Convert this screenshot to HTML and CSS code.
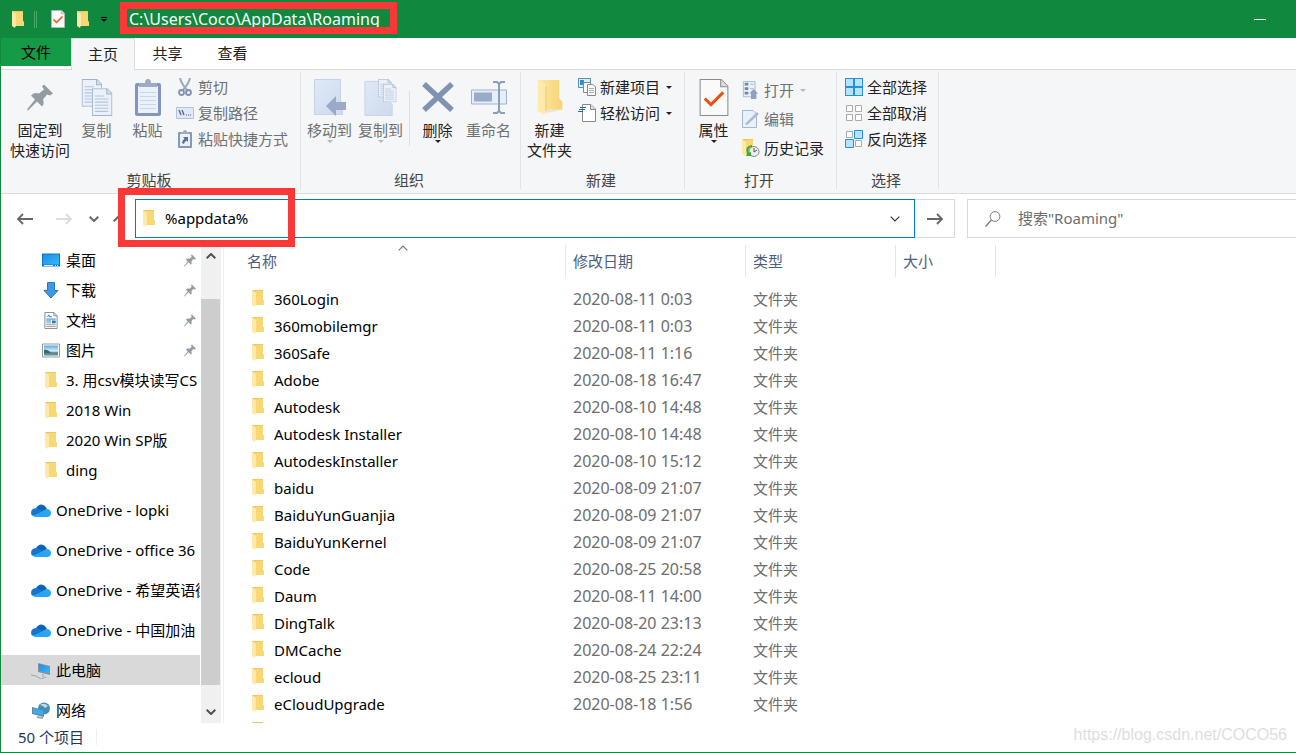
FILE: index.html
```html
<!DOCTYPE html>
<html lang="zh-CN">
<head>
<meta charset="utf-8">
<title>Roaming</title>
<link rel="stylesheet" href="styles.css">
</head>
<body>
<svg class="sprite" aria-hidden="true">
  <defs>
    <linearGradient id="gold" x1="0" x2="1"><stop offset="0" stop-color="#ffe9a3"/><stop offset="1" stop-color="#f7d374"/></linearGradient>
    <linearGradient id="pale" x1="0" y1="0" x2="1" y2="1"><stop offset="0" stop-color="#dfe9f7"/><stop offset="1" stop-color="#cddaed"/></linearGradient>
    <linearGradient id="sky" x1="0" y1="0" x2="0" y2="1"><stop offset="0" stop-color="#5aa5e8"/><stop offset=".5" stop-color="#cfe8f8"/><stop offset="1" stop-color="#3f7f9a"/></linearGradient>
    <linearGradient id="screen" x1="0" y1="0" x2="1" y2="1"><stop offset="0" stop-color="#1b8fe6"/><stop offset="1" stop-color="#35b5ff"/></linearGradient>
  </defs>
  <symbol id="folder" viewBox="0 0 12 17"><path d="M0 0H11V10L12 11V15H3Z" fill="#f0c75f"/><path d="M3 1H11V10L12 11V15H3Z" fill="#f8d775"/><path d="M0 0L4 3V14L3 17L0 15Z" fill="#ffe9a8"/></symbol>
  <symbol id="bigfolder" viewBox="0 0 24 36"><path d="M0 1H21V19L24 22V30H5Z" fill="url(#gold)"/><path d="M6 30H24V30L8 33Z" fill="#eee3d0"/><path d="M0 1L8 6V33L6 35L0 31Z" fill="#ffeaae"/><path d="M8 7V31" stroke="#edc867"/></symbol>
  <symbol id="check" viewBox="0 0 28 36"><path d="M.5.5H21L27.500 7V35.500H.5Z" fill="#fafafa" stroke="#8c8c8c"/><path d="M20.500.5V7.500H27.500" fill="#ddd" stroke="#8c8c8c"/><path d="M5 19L11 25L23 13" fill="none" stroke="#ea5212" stroke-width="3"/></symbol>
  <symbol id="pin" viewBox="0 0 26 26"><path d="M17 0L26 9L23 11L20 10L16 15C17 18 17 20 15 22L10 17L1 26L0 25L8 15L4 11C7 8 9 8 12 9L17 5L15 2Z" fill="#929da3"/></symbol>
  <symbol id="page" viewBox="0 0 20 27"><path d="M.5.5H15L19.500 5V26.500H.5Z" fill="#eaf1fb" stroke="#a3b3cd"/><path d="M14.500.5V5.500H19.500" fill="#d5dfef" stroke="#a3b3cd"/><path d="M3 7.500H12M3 10.500H16M3 13.500H16M3 16.500H16M3 19.500H16M3 22.500H16" stroke="#b5c3da"/></symbol>
  <symbol id="copy" viewBox="0 0 30 36"><use href="#page" width="20" height="27"/><use href="#page" x="10" y="9" width="20" height="27"/></symbol>
  <symbol id="paste" viewBox="0 0 26 37"><rect y="4" width="26" height="33" rx="2" fill="#8296bd"/><rect x="3" y="7" width="20" height="27" fill="#eaf1fb"/><path d="M5 13.500H21M5 17.500H21M5 21.500H21M5 25.500H21M5 29.500H21" stroke="#c9d6e9"/><path d="M4 8V4H10Q10 0 13 0T16 4H22V8Z" fill="#a0aac0"/></symbol>
  <symbol id="cut" viewBox="0 0 14 18"><path d="M2 0Q3 5 9 12M12 0Q11 5 5 12" fill="none" stroke="#9aa9c2" stroke-width="2"/><circle cx="3.500" cy="14.500" r="2.500" fill="none" stroke="#7f93b5" stroke-width="1.800"/><circle cx="10.500" cy="14.500" r="2.500" fill="none" stroke="#7f93b5" stroke-width="1.800"/></symbol>
  <symbol id="path" viewBox="0 0 18 12"><path d="M.5.5H17.500V11.500H.5Z" fill="#dfe9f7" stroke="#b3c3dc"/><path d="M3 3L5 8M6 3L8 8" stroke="#4c6288" stroke-width="1.300"/><path d="M10 8H11M12 8H13M14 8H15" stroke="#4c6288"/></symbol>
  <symbol id="shortcut" viewBox="0 0 14 18"><rect y="2" width="14" height="16" rx="1" fill="#8598bb"/><path d="M2 4H12V16H2Z" fill="#eaf1fb"/><path d="M3 4V2H5Q5 0 7 0T9 2H11V4Z" fill="#a0aac0"/><path d="M5 7H10V12L8.500 10.500Q6 12 6 14L4 13Q4 11 6.500 8.500Z" fill="#566f9b"/></symbol>
  <symbol id="move" viewBox="0 0 32 37"><path d="M.5.5H26.500V22L28.500 24V35.500H.5Z" fill="url(#pale)" stroke="#c5d3e8"/><path d="M12 27L22 17V23H32V31H22V37Z" fill="#9aaac8"/></symbol>
  <symbol id="copyto" viewBox="0 0 34 38"><path d="M.5 2.500H26.500V24L28.500 26V37.500H.5Z" fill="url(#pale)" stroke="#c5d3e8"/><use href="#page" x="14" width="14" height="19"/><use href="#page" x="19" y="5" width="14" height="19"/></symbol>
  <symbol id="delete" viewBox="0 0 36 37"><path d="M4 5L32 31M32 5L4 31" stroke="#8092b3" stroke-width="5.500"/></symbol>
  <symbol id="rename" viewBox="0 0 36 34"><path d="M.5 9.500H35.500V23.500H.5Z" fill="#e5eefa" stroke="#9fb1cf"/><path d="M3 12H21V21H3Z" fill="#9aabc9"/><path d="M22 1.500H26L28 3.500L30 1.500H34M28 3V31M22 32.500H26L28 30.500L30 32.500H34" fill="none" stroke="#8b9dbd" stroke-width="2"/></symbol>
  <symbol id="newitem" viewBox="0 0 18 18"><path d="M.5.5H12.500V9.500H.5Z" fill="#d7effc" stroke="#5790b0"/><path d="M2 2H6V7H2Z" fill="#398ccc"/><path d="M5.500 4.500H12.500V14.500H5.500Z" fill="#fff" stroke="#888"/><path d="M9.500 6.500H15L17.500 9V17.500H9.500Z" fill="#fff" stroke="#888"/><path d="M11 10.500H16M11 12.500H16M11 14.500H16" stroke="#aaa"/></symbol>
  <symbol id="easy" viewBox="0 0 18 18"><path d="M4.500.5H13L17.500 5V17.500H4.500Z" fill="#fff" stroke="#888"/><path d="M12.500.5V5.500H17.500" fill="#ddd" stroke="#888"/><path d="M2 3.500H8M1 5.500H7M0 7.500H5" stroke="#2467a8"/></symbol>
  <symbol id="open" viewBox="0 0 18 20"><path d="M.5.5H13.500V17.500H.5Z" fill="#e8f0fb" stroke="#a7b5ce"/><path d="M2 2H6V5H2ZM2 7H6V10H2ZM2 12H6V15H2Z" fill="#7186aa"/><path d="M8 3.500H12M8 8.500H12" stroke="#a7b5ce"/><path d="M12 9L17 14H15V20H9V14H7Z" fill="#8fa1c1"/></symbol>
  <symbol id="edit" viewBox="0 0 18 18"><path d="M.5.5H11L14.500 4V17.500H.5Z" fill="#e8f0fb" stroke="#a7b5ce"/><path d="M3 14L15 2L17 4L5 15Z" fill="#a9b9d3"/></symbol>
  <symbol id="history" viewBox="0 0 18 18"><use href="#folder" width="12" height="17"/><circle cx="12" cy="12.500" r="5" fill="#eee" stroke="#888"/><path d="M12 9V13L15 11" fill="none" stroke="#555"/><path d="M10 8Q5 8 7 14L9 13V17H4L5 15Q2 7 10 6Z" fill="#36ad38"/></symbol>
  <symbol id="all" viewBox="0 0 18 18"><path d="M0 0H18V18H0Z" fill="#278ee0"/><path d="M1 1H8V8H1ZM10 1H17V8H10ZM1 10H8V17H1ZM10 10H17V17H10Z" fill="#b8e3ff"/></symbol>
  <symbol id="none" viewBox="0 0 18 18"><path d="M1.500 1.500H7.500V7.500H1.500ZM10.500 1.500H16.500V7.500H10.500ZM1.500 10.500H7.500V16.500H1.500ZM10.500 10.500H16.500V16.500H10.500Z" fill="#fff" stroke="#aaa"/></symbol>
  <symbol id="invert" viewBox="0 0 18 18"><use href="#none" width="18" height="18"/><path d="M9.500.5H17.500V8.500H9.500ZM.5 9.500H8.500V17.500H.5Z" fill="#b8e3ff" stroke="#278ee0"/></symbol>
  <symbol id="caret" viewBox="0 0 6 3"><path d="M0 0H6L3 3Z" fill="currentColor"/></symbol>
  <symbol id="chev" viewBox="0 0 10 6"><path d="M.7.7L5 5L9.300.7" fill="none" stroke="currentColor" stroke-width="var(--w,1.200)"/></symbol>
  <symbol id="chevup" viewBox="0 0 10 6"><path d="M.7 5.300L5 1L9.300 5.300" fill="none" stroke="currentColor" stroke-width="var(--w,1.200)"/></symbol>
  <symbol id="arrow" viewBox="0 0 16 12"><path d="M0 6H15M10 1L15 6L10 11" fill="none" stroke="currentColor" stroke-width="1.800"/></symbol>
  <symbol id="arrowleft" viewBox="0 0 16 12"><path d="M16 6H1M6 1L1 6L6 11" fill="none" stroke="currentColor" stroke-width="1.800"/></symbol>
  <symbol id="lens" viewBox="0 0 16 16"><circle cx="10" cy="5.500" r="4.900" fill="none" stroke="currentColor"/><path d="M6.500 9L.5 15.500" stroke="currentColor" stroke-width="1.200"/></symbol>
  <symbol id="desktop" viewBox="0 0 18 14"><path d="M0 0H18V13H0Z" fill="#0b76cc"/><path d="M1 1H17V11H1Z" fill="url(#screen)"/><path d="M2 12H11M13 12H14M15 12H16" stroke="#d9f0ff"/></symbol>
  <symbol id="down" viewBox="0 0 16 17"><path d="M4.500.5H11.500V8.500H15L8 16L1 8.500H4.500Z" fill="#3e98e4" stroke="#2879c2"/></symbol>
  <symbol id="doc" viewBox="0 0 14 18"><path d="M.5.5H10L13.500 4V17.500H.5Z" fill="#fff" stroke="#888"/><path d="M10 .5V4H13.500" fill="none" stroke="#888"/><path d="M3 5L5 3V5H8" fill="none" stroke="#1683d2"/><path d="M2 7.500H12M2 9.500H7" stroke="#1683d2"/><path d="M8 9H12V12H8Z" fill="#227fb9"/><path d="M2 11.500H7M2 13.500H12M2 15.500H12" stroke="#999"/></symbol>
  <symbol id="picture" viewBox="0 0 18 14"><path d="M.5.5H17.500V13.500H.5Z" fill="#fff" stroke="#999"/><path d="M2 2H16V12H2Z" fill="url(#sky)"/><path d="M2 6Q6 6 9 9H16V10H2Z" fill="#376b57"/></symbol>
  <symbol id="cloud" viewBox="0 0 20 13"><path d="M5 4Q9-2 14 2L16 5L11 8Z" fill="#0864b8"/><path d="M0 9Q0 4 6 4L13 8L2 12Q0 11 0 9Z" fill="#1078d0"/><path d="M12 7L15 5Q20 5 20 9Q20 13 16 13H4L2 12Z" fill="#29a7ee"/></symbol>
  <symbol id="pc" viewBox="0 0 20 17"><path d="M7 1L19 4V13L7 10Z" fill="#85929b"/><path d="M8 2L18 5V11L8 9Z" fill="url(#screen)"/><path d="M0 13L5 14L10 17L15 15M12 12V15" fill="none" stroke="#98a5ad"/></symbol>
  <symbol id="network" viewBox="0 0 18 17"><circle cx="12" cy="6.500" r="6" fill="#438eb4"/><path d="M8 3Q12 0 16 4L13 6L11 4Z" fill="#c0ddeb"/><path d="M0 5L12 8V15L0 12Z" fill="#67889d"/><path d="M1 6L11 9V13L1 11Z" fill="#34adf5"/><path d="M5 15L11 16" stroke="#9aa8af" stroke-width="2"/></symbol>
</svg>

<div class="window">
  <header class="titlebar">
    <svg class="i-folder"><use href="#folder"/></svg>
    <span class="quick-sep"></span>
    <button class="plain" aria-label="属性"><svg class="i-check-sm"><use href="#check"/></svg></button>
    <button class="plain" aria-label="新建文件夹"><svg class="i-folder"><use href="#folder"/></svg></button>
    <button class="plain customize" aria-label="自定义快速访问工具栏"><span></span><svg class="i-caret"><use href="#caret"/></svg></button>
    <div class="title">C:\Users\Coco\AppData\Roaming<span class="mark mark-title"></span></div>
    <button class="plain minimize" aria-label="最小化"><span></span></button>
  </header>

  <nav class="tabs">
    <button class="tab tab-file">文件</button><button class="tab tab-active">主页</button><button class="tab">共享</button><button class="tab">查看</button>
  </nav>

  <section class="ribbon">
    <div class="group">
      <div class="tools lead">
        <button class="big wide"><svg class="i-pin-lg"><use href="#pin"/></svg><span>固定到<br>快速访问</span></button>
        <button class="big off"><svg class="i-big"><use href="#copy"/></svg><span>复制</span></button>
        <button class="big off"><svg class="i-big"><use href="#paste"/></svg><span>粘贴</span></button>
        <div class="stack">
          <button class="small off"><svg class="i-sm"><use href="#cut"/></svg>剪切</button>
          <button class="small off"><svg class="i-sm"><use href="#path"/></svg>复制路径</button>
          <button class="small off"><svg class="i-sm"><use href="#shortcut"/></svg>粘贴快捷方式</button>
        </div>
      </div>
      <div class="caption">剪贴板</div>
    </div>
    <div class="group">
      <div class="tools">
        <button class="big off"><svg class="i-big"><use href="#move"/></svg><span>移动到</span><svg class="i-caret"><use href="#caret"/></svg></button>
        <button class="big off"><svg class="i-big"><use href="#copyto"/></svg><span>复制到</span><svg class="i-caret"><use href="#caret"/></svg></button>
        <span class="inner-sep"></span>
        <button class="big"><svg class="i-big"><use href="#delete"/></svg><span>删除</span><svg class="i-caret"><use href="#caret"/></svg></button>
        <button class="big off"><svg class="i-big"><use href="#rename"/></svg><span>重命名</span></button>
      </div>
      <div class="caption">组织</div>
    </div>
    <div class="group">
      <div class="tools">
        <button class="big"><svg class="i-big"><use href="#bigfolder"/></svg><span>新建<br>文件夹</span></button>
        <div class="stack">
          <button class="small"><svg class="i-sm"><use href="#newitem"/></svg>新建项目<svg class="i-caret"><use href="#caret"/></svg></button>
          <button class="small"><svg class="i-sm"><use href="#easy"/></svg>轻松访问<svg class="i-caret"><use href="#caret"/></svg></button>
        </div>
      </div>
      <div class="caption">新建</div>
    </div>
    <div class="group">
      <div class="tools">
        <button class="big"><svg class="i-big"><use href="#check"/></svg><span>属性</span><svg class="i-caret"><use href="#caret"/></svg></button>
        <div class="stack loose">
          <button class="small off"><svg class="i-sm"><use href="#open"/></svg>打开<svg class="i-caret"><use href="#caret"/></svg></button>
          <button class="small off"><svg class="i-sm"><use href="#edit"/></svg>编辑</button>
          <button class="small"><svg class="i-sm"><use href="#history"/></svg>历史记录</button>
        </div>
      </div>
      <div class="caption">打开</div>
    </div>
    <div class="group">
      <div class="tools">
        <div class="stack">
          <button class="small"><svg class="i-sm"><use href="#all"/></svg>全部选择</button>
          <button class="small"><svg class="i-sm"><use href="#none"/></svg>全部取消</button>
          <button class="small"><svg class="i-sm"><use href="#invert"/></svg>反向选择</button>
        </div>
      </div>
      <div class="caption">选择</div>
    </div>
  </section>

  <div class="location">
    <div class="history">
      <button class="plain" aria-label="后退"><svg class="i-arrow"><use href="#arrowleft"/></svg></button>
      <button class="plain faint" aria-label="前进"><svg class="i-arrow"><use href="#arrow"/></svg></button>
      <button class="plain recent" aria-label="最近浏览的位置"><svg class="i-chev bold"><use href="#chev"/></svg></button>
      <button class="plain" aria-label="上移"><svg class="i-chev bold"><use href="#chevup"/></svg></button>
    </div>
    <div class="address">
      <svg class="i-folder"><use href="#folder"/></svg>
      <input type="text" value="%appdata%" aria-label="地址">
      <button class="plain" aria-label="以前的位置"><svg class="i-chev"><use href="#chev"/></svg></button>
      <span class="mark mark-address"></span>
    </div>
    <button class="plain go" aria-label="转到"><svg class="i-arrow"><use href="#arrow"/></svg></button>
    <label class="search"><svg class="i-lens"><use href="#lens"/></svg><input type="text" placeholder='搜索"Roaming"' aria-label="搜索"></label>
  </div>

  <main class="content">
    <nav class="tree">
      <a href="#" class="node sub"><svg><use href="#desktop"/></svg><span>桌面</span><svg class="i-pin"><use href="#pin"/></svg></a>
      <a href="#" class="node sub"><svg><use href="#down"/></svg><span>下载</span><svg class="i-pin"><use href="#pin"/></svg></a>
      <a href="#" class="node sub"><svg><use href="#doc"/></svg><span>文档</span><svg class="i-pin"><use href="#pin"/></svg></a>
      <a href="#" class="node sub"><svg><use href="#picture"/></svg><span>图片</span><svg class="i-pin"><use href="#pin"/></svg></a>
      <a href="#" class="node sub"><svg><use href="#folder"/></svg><span>3. 用csv模块读写CS</span></a>
      <a href="#" class="node sub"><svg><use href="#folder"/></svg><span>2018 Win</span></a>
      <a href="#" class="node sub"><svg><use href="#folder"/></svg><span>2020 Win SP版</span></a>
      <a href="#" class="node sub"><svg><use href="#folder"/></svg><span>ding</span></a>
      <a href="#" class="node root"><svg><use href="#cloud"/></svg><span>OneDrive - lopki</span></a>
      <a href="#" class="node root"><svg><use href="#cloud"/></svg><span>OneDrive - office 36</span></a>
      <a href="#" class="node root"><svg><use href="#cloud"/></svg><span>OneDrive - 希望英语街</span></a>
      <a href="#" class="node root"><svg><use href="#cloud"/></svg><span>OneDrive - 中国加油</span></a>
      <a href="#" class="node root selected"><svg><use href="#pc"/></svg><span>此电脑</span></a>
      <a href="#" class="node root"><svg><use href="#network"/></svg><span>网络</span></a>
    </nav>
    <div class="scroll">
      <button class="plain" aria-label="向上滚动"><svg class="i-chev bold"><use href="#chevup"/></svg></button>
      <div class="track"><div class="thumb"></div></div>
      <button class="plain" aria-label="向下滚动"><svg class="i-chev bold"><use href="#chev"/></svg></button>
    </div>
    <div class="list">
      <table class="files">
        <colgroup><col class="c-name"><col class="c-date"><col class="c-type"><col class="c-size"></colgroup>
        <thead><tr><th>名称<svg class="i-chev sort"><use href="#chevup"/></svg></th><th>修改日期</th><th>类型</th><th>大小</th></tr></thead>
        <tbody>
          <tr><td><svg class="i-folder"><use href="#folder"/></svg>360Login</td><td class="date">2020-08-11 0:03</td><td>文件夹</td><td></td></tr>
          <tr><td><svg class="i-folder"><use href="#folder"/></svg>360mobilemgr</td><td class="date">2020-08-11 0:03</td><td>文件夹</td><td></td></tr>
          <tr><td><svg class="i-folder"><use href="#folder"/></svg>360Safe</td><td class="date">2020-08-11 1:16</td><td>文件夹</td><td></td></tr>
          <tr><td><svg class="i-folder"><use href="#folder"/></svg>Adobe</td><td class="date">2020-08-18 16:47</td><td>文件夹</td><td></td></tr>
          <tr><td><svg class="i-folder"><use href="#folder"/></svg>Autodesk</td><td class="date">2020-08-10 14:48</td><td>文件夹</td><td></td></tr>
          <tr><td><svg class="i-folder"><use href="#folder"/></svg>Autodesk Installer</td><td class="date">2020-08-10 14:48</td><td>文件夹</td><td></td></tr>
          <tr><td><svg class="i-folder"><use href="#folder"/></svg>AutodeskInstaller</td><td class="date">2020-08-10 15:12</td><td>文件夹</td><td></td></tr>
          <tr><td><svg class="i-folder"><use href="#folder"/></svg>baidu</td><td class="date">2020-08-09 21:07</td><td>文件夹</td><td></td></tr>
          <tr><td><svg class="i-folder"><use href="#folder"/></svg>BaiduYunGuanjia</td><td class="date">2020-08-09 21:07</td><td>文件夹</td><td></td></tr>
          <tr><td><svg class="i-folder"><use href="#folder"/></svg>BaiduYunKernel</td><td class="date">2020-08-09 21:07</td><td>文件夹</td><td></td></tr>
          <tr><td><svg class="i-folder"><use href="#folder"/></svg>Code</td><td class="date">2020-08-25 20:58</td><td>文件夹</td><td></td></tr>
          <tr><td><svg class="i-folder"><use href="#folder"/></svg>Daum</td><td class="date">2020-08-11 14:00</td><td>文件夹</td><td></td></tr>
          <tr><td><svg class="i-folder"><use href="#folder"/></svg>DingTalk</td><td class="date">2020-08-20 23:13</td><td>文件夹</td><td></td></tr>
          <tr><td><svg class="i-folder"><use href="#folder"/></svg>DMCache</td><td class="date">2020-08-24 22:24</td><td>文件夹</td><td></td></tr>
          <tr><td><svg class="i-folder"><use href="#folder"/></svg>ecloud</td><td class="date">2020-08-25 23:11</td><td>文件夹</td><td></td></tr>
          <tr><td><svg class="i-folder"><use href="#folder"/></svg>eCloudUpgrade</td><td class="date">2020-08-18 1:56</td><td>文件夹</td><td></td></tr>
          <tr><td><svg class="i-folder"><use href="#folder"/></svg></td><td></td><td></td><td></td></tr>
        </tbody>
      </table>
    </div>
  </main>

  <footer class="status"><span class="count">50 个项目</span><span class="watermark">https://blog.csdn.net/COCO56</span></footer>
</div>
</body>
</html>
```

FILE: styles.css
```css
* { box-sizing: border-box; }
body, button, input {
  font-family: "Noto Sans", "Noto Sans CJK SC", sans-serif;
  font-size: 15px;
  line-height: 20px;
}
body { margin: 0; color: #000; background: #fff; }
button, input { margin: 0; padding: 0; border: 0; background: none; color: inherit; outline: 0; }
svg { display: block; flex: none; }
.sprite { position: absolute; width: 0; height: 0; }
.plain { display: flex; align-items: center; justify-content: center; }

.i-folder { width: 12px; height: 17px; }
.i-check-sm { width: 14px; height: 18px; }
.i-caret { width: 6px; height: 3px; }
.i-chev { width: 10px; height: 6px; }
.bold { --w: 2; }
.i-arrow { width: 16px; height: 12px; }
.i-lens { width: 16px; height: 16px; }
.i-pin { width: 12px; height: 13px; }
.i-big { width: 36px; height: 37px; }
.i-pin-lg { width: 26px; height: 37px; }
.i-sm { width: 18px; height: 18px; }

.window {
  height: 100vh;
  display: flex;
  flex-direction: column;
  overflow: hidden;
  border: solid #10893e;
  border-width: 0 0 1px 1px;
}

.titlebar {
  flex: none;
  height: 38px;
  display: flex;
  align-items: center;
  padding-left: 11px;
  background: #10893e;
  color: #fff;
}
.quick-sep { width: 3px; height: 17px; margin: 0 14px 0 10px; border: 1px solid #4aa76c; border-width: 0 1px; }
.titlebar .plain + .plain { margin-left: 12px; }
.titlebar .customize { flex-direction: column; gap: 1px; color: #000; }
.customize span { width: 6px; height: 1px; background: #000; }
.title { position: relative; flex: 1; margin-left: 22px; font-size: 16px; white-space: nowrap; }
.minimize { width: 72px; height: 38px; }
.minimize span { width: 12px; height: 1px; background: #fff; }

.mark { position: absolute; border: 7px solid #fb3838; pointer-events: none; z-index: 2; }
.mark-title { left: -9px; top: -7px; width: 277px; height: 32px; }
.mark-address { left: -18px; top: -12px; width: 177px; height: 59px; }

.tabs { flex: none; height: 32px; display: flex; border-bottom: 1px solid #dadbdc; }
.tab { width: 65px; height: 30px; color: #222; }
.tab-file { width: 70px; height: 28px; background: #159a48; color: #000; }
.tab-active { width: 64px; height: 32px; padding-bottom: 2px; background: #f5f6f7; border: 1px solid #dadbdc; border-bottom: 0; }

.ribbon { flex: none; height: 124px; display: flex; padding: 2px 0 4px; background: #f5f6f7; border-bottom: 1px solid #dadbdc; }
.group { display: flex; flex-direction: column; justify-content: space-between; padding: 5px 6px 0 3px; border-right: 1px solid #e2e3e4; }
.tools { display: flex; align-items: flex-start; }
.lead { padding-left: 5px; }
.caption { text-align: center; line-height: 18px; color: #444; }
.big { display: flex; flex-direction: column; align-items: center; width: 51px; padding-top: 2px; white-space: nowrap; color: #222; }
.big > span { margin-top: 4px; }
.big .i-caret { margin-top: 0; }
.big.wide { width: 62px; }
.off { color: #6e7073; }
.off .i-caret { color: #b5b7b9; }
.inner-sep { width: 1px; height: 55px; margin: 14px 2px 0 3px; background: #dfe0e1; }
.stack { display: flex; flex-direction: column; gap: 6px; padding: 0 6px 0 3px; }
.stack.loose { gap: 9px; padding-top: 3px; }
.small { display: flex; align-items: center; gap: 4px; white-space: nowrap; color: #222; }
.small.off { color: #6e7073; }
.small .i-caret { margin-left: 2px; }
.group:last-child { padding-left: 8px; padding-right: 11px; }
.group:last-child .stack { padding: 0; }

.location { flex: none; display: flex; height: 51px; padding: 5px 0 7px; }
.history { display: flex; align-items: center; width: 134px; flex: none; padding-left: 16px; color: #666; }
.history .plain + .plain { margin-left: 23px; }
.history .recent.plain { margin-left: 17px; }
.history .recent + .plain { margin-left: 14px; }
.history .faint { color: #ddd; }
.address { position: relative; flex: 1; min-width: 200px; display: flex; align-items: center; padding: 0 14px 0 7px; border: 1px solid #0078d7; }
.address input { flex: 1; min-width: 0; margin-left: 10px; padding-bottom: 2px; }
.address .plain { color: #333; }
.go { width: 40px; border: 1px solid #d9d9d9; border-left: 0; color: #666; }
.search { flex: 0 1 329px; display: flex; align-items: center; margin-left: 12px; padding-left: 17px; gap: 17px; border: 1px solid #d9d9d9; border-right: 0; color: #767676; }
.search input { flex: 1; min-width: 0; padding-bottom: 2px; }
.search input::placeholder { color: #6d6d6d; opacity: 1; }

.content { flex: 1; min-height: 0; display: flex; overflow: hidden; }
.tree { width: 199px; flex: none; overflow: hidden; }
.node { display: flex; align-items: center; height: 30px; color: #000; text-decoration: none; white-space: nowrap; }
.node.sub { padding: 0 4px 0 41px; }
.node.root { padding-left: 30px; margin-top: 10px; }
.node.sub span { margin-left: 6px; }
.node.root span { margin-left: 5px; }
.node.sub > svg:first-child { width: 18px; height: 17px; }
.node.root > svg:first-child { width: 20px; height: 17px; }
.node .i-pin { margin-left: auto; }
.selected { background: #d9d9d9; }
.scroll { width: 20px; flex: none; display: flex; flex-direction: column; margin-left: 1px; background: #f0f0f0; color: #505050; }
.scroll .plain { height: 22px; }
.track { flex: 1; display: flex; flex-direction: column; padding: 32px 1px 16px 0; }
.thumb { flex: 1; background: #cdcdcd; }
.list { flex: 1; min-width: 0; margin-left: 2px; padding-left: 16px; border-left: 1px solid #f0f0f0; overflow: hidden; }
.files { width: 756px; table-layout: fixed; border-collapse: separate; border-spacing: 0; color: #6d6d6d; }
.c-name { width: 326px; }
.c-date { width: 180px; }
.c-type { width: 150px; }
.c-size { width: 100px; }
.files th { position: relative; height: 32px; padding: 0 7px; text-align: left; font-weight: 400; color: #4c607a; border-right: 1px solid #e5e5e5; }
.files tbody::before { content: ""; display: block; height: 8px; }
.files td { height: 27px; padding: 0 7px; white-space: nowrap; }
.files td:first-child { display: flex; align-items: center; gap: 10px; padding-left: 12px; color: #000; }
.files .date { font-size: 16px; }
.sort { position: absolute; top: 0; left: 50%; margin-left: -5px; color: #777; }

.status { flex: none; height: 29px; display: flex; align-items: center; justify-content: space-between; padding: 0 9px 2px 17px; color: #1e395b; }
.count { padding-right: 12px; border-right: 1px solid #eee; line-height: 16px; }
.watermark { padding-bottom: 4px; font-family: "Liberation Sans", Arial, sans-serif; font-size: 16px; color: #dedede; }
```
